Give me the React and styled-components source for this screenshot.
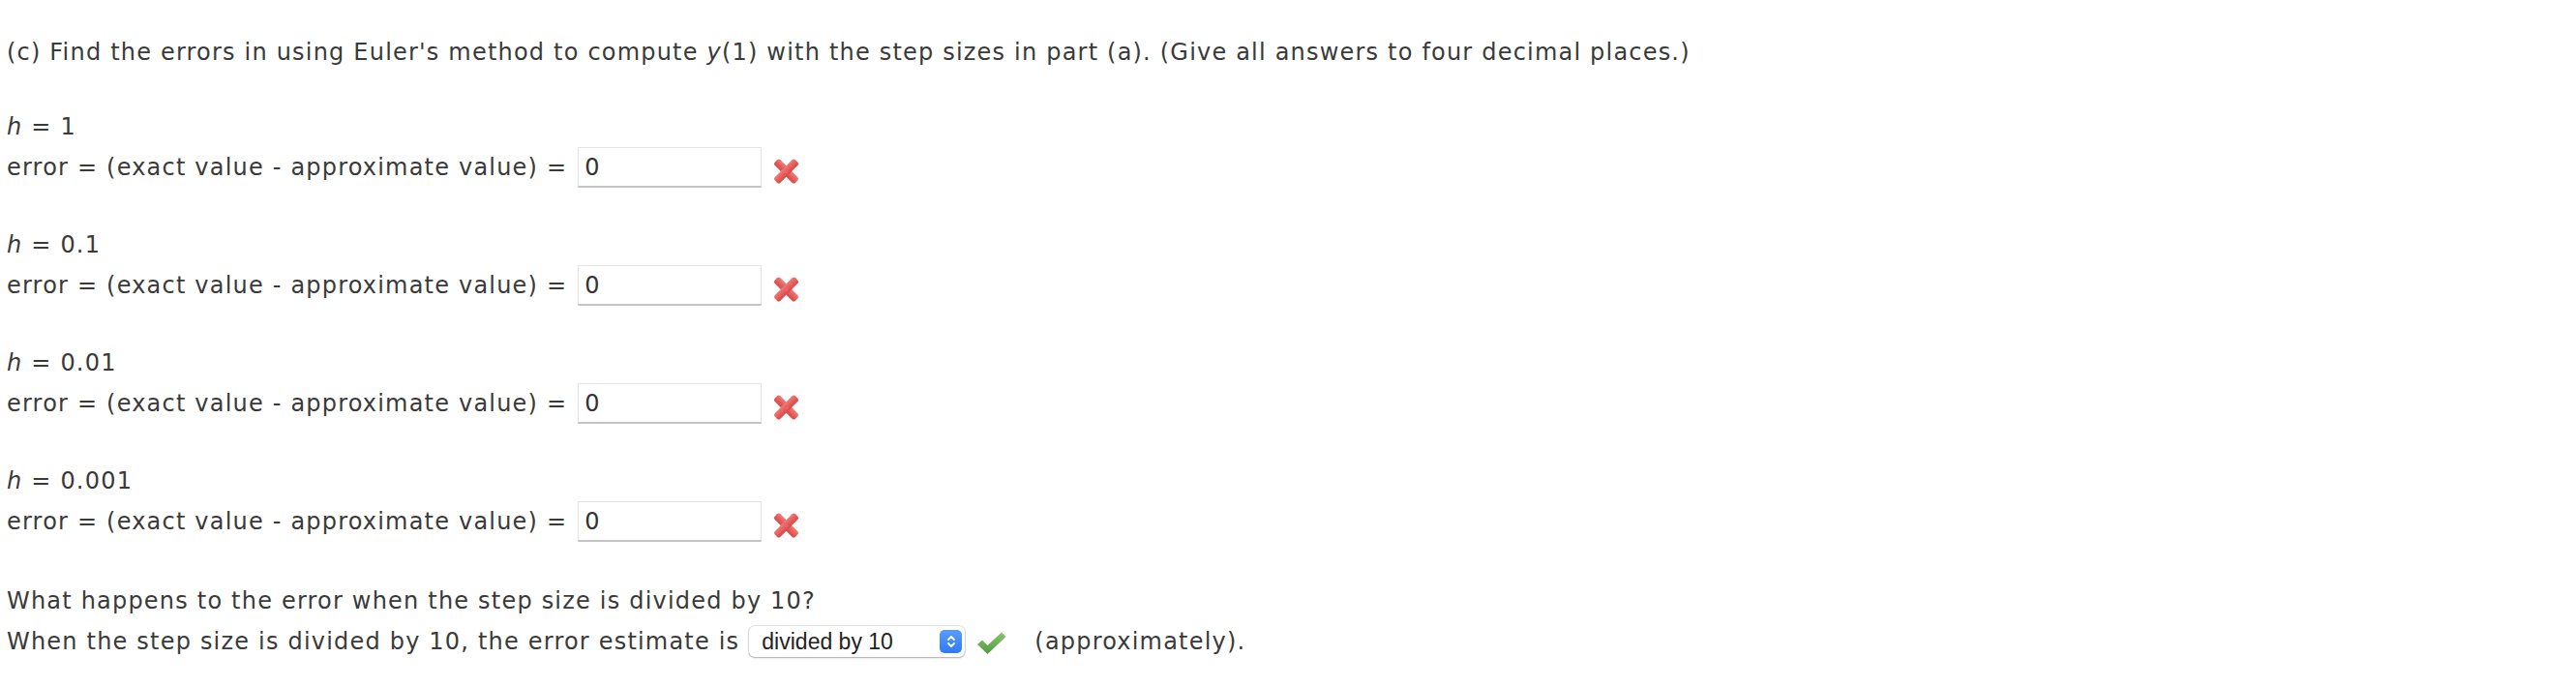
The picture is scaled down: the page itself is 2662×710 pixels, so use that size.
import React from "react";
import styled, { createGlobalStyle } from "styled-components";

const GlobalStyle = createGlobalStyle`
  body {
    margin: 0;
    background: #ffffff;
    font-family: "DejaVu Sans", Verdana, sans-serif;
    color: #3a3a3a;
  }
`;

const Page = styled.div`
  padding: 33px 7px 0 7px;
  font-size: 24px;
  letter-spacing: 1.2px;
`;

const Line = styled.div`
  display: flex;
  align-items: center;
  height: 42px;
  line-height: 42px;
  white-space: pre;
`;

const Block = styled.div`
  margin-top: ${(p) => p.gap || 38}px;
`;

const Var = styled.i`
  font-style: italic;
`;

const AnswerBox = styled.input`
  box-sizing: border-box;
  width: 190px;
  height: 42px;
  margin-left: 11px;
  padding: 0 6px;
  border: 1px solid #e4e4e4;
  border-bottom: 2px solid #c4c4c4;
  font-family: "DejaVu Sans", Verdana, sans-serif;
  font-size: 24px;
  color: #333;
  background: #fff;
  outline: none;
`;

const Mark = styled.span`
  display: inline-flex;
  margin-left: ${(p) => p.left}px;
  margin-top: ${(p) => p.down}px;
`;

const Select = styled.div`
  box-sizing: border-box;
  display: flex;
  align-items: center;
  justify-content: space-between;
  width: 223px;
  height: 32px;
  margin-left: 10px;
  padding: 0 3px 0 13px;
  border-radius: 6px;
  background: #fff;
  box-shadow: 0 0 0 1px rgba(0, 0, 0, 0.1), 0 1px 2px rgba(0, 0, 0, 0.25);
  font-family: "Liberation Sans", Arial, sans-serif;
  font-size: 23px;
  letter-spacing: 0;
  color: #222;
  line-height: 32px;
`;

const Stepper = styled.span`
  display: flex;
  align-items: center;
  justify-content: center;
  width: 23px;
  height: 24px;
  border-radius: 5px;
  background: linear-gradient(#5a9cfb, #2f7bf5);
`;

const Tail = styled.span`
  margin-left: 29px;
`;

const CrossIcon = () => (
  <svg width="27" height="26" viewBox="0 0 27 26">
    <defs>
      <linearGradient id="xr" x1="0" y1="0" x2="0" y2="1">
        <stop offset="0" stopColor="#f07a78" />
        <stop offset="1" stopColor="#d94745" />
      </linearGradient>
    </defs>
    <g transform="translate(13.5 13)">
      <rect x="-15" y="-4" width="30" height="8" rx="2.5" fill="url(#xr)" transform="rotate(45)" />
      <rect x="-15" y="-4" width="30" height="8" rx="2.5" fill="url(#xr)" transform="rotate(-45)" />
      <circle r="2.2" fill="#e56664" />
    </g>
  </svg>
);

const CheckIcon = () => (
  <svg width="31" height="25" viewBox="0 0 31 25">
    <defs>
      <linearGradient id="ck" x1="0" y1="0" x2="0" y2="1">
        <stop offset="0" stopColor="#86c46e" />
        <stop offset="1" stopColor="#559a42" />
      </linearGradient>
    </defs>
    <path d="M1 14 L6 9.5 L11.5 15 L26 1.5 L30.5 6 L11.5 24 Z" fill="url(#ck)" />
  </svg>
);

const Chevrons = () => (
  <svg width="12" height="16" viewBox="0 0 12 16">
    <path d="M3 6 L6 3 L9 6 M3 10 L6 13 L9 10" stroke="#fff" strokeWidth="1.8" fill="none" strokeLinecap="round" strokeLinejoin="round" />
  </svg>
);

const steps = ["1", "0.1", "0.01", "0.001"];

const App = () => (
  <Page>
    <GlobalStyle />
    <Line>
      (c) Find the errors in using Euler's method to compute <Var>y</Var>(1) with the step sizes in part (a). (Give all answers to four decimal places.)
    </Line>
    {steps.map((h, i) => (
      <Block key={h} gap={i === 0 ? 35 : 38}>
        <Line>
          <Var>h</Var> = {h}
        </Line>
        <Line>
          error = (exact value - approximate value) =
          <AnswerBox defaultValue="0" />
          <Mark left={12} down={8}>
            <CrossIcon />
          </Mark>
        </Line>
      </Block>
    ))}
    <Block gap={40}>
      <Line>What happens to the error when the step size is divided by 10?</Line>
      <Line>
        When the step size is divided by 10, the error estimate is
        <Select>
          divided by 10
          <Stepper>
            <Chevrons />
          </Stepper>
        </Select>
        <Mark left={12} down={2}>
          <CheckIcon />
        </Mark>
        <Tail>(approximately).</Tail>
      </Line>
    </Block>
  </Page>
);

export default App;
